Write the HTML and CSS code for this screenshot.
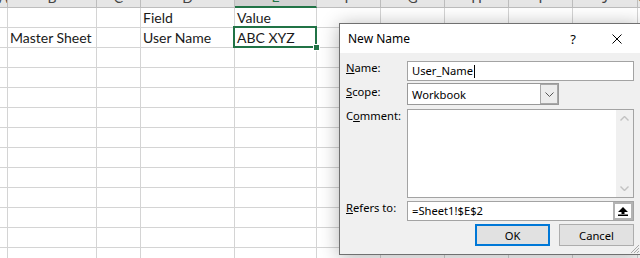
FILE: index.html
```html
<!DOCTYPE html>
<html lang="en">
<head>
  <meta charset="UTF-8">
  <title>New Name</title>
  <meta name="viewport" content="width=device-width, initial-scale=1">
  <link rel="stylesheet" href="styles.css">
</head>
<body>
  <!-- worksheet grid -->
  <div class="sheet" id="sheet">
    <div class="col-head"><span>A</span></div>
    <div class="col-head"><span>B</span></div>
    <div class="col-head"><span>C</span></div>
    <div class="col-head"><span>D</span></div>
    <div class="col-head active"><span>E</span></div>
    <div class="col-head"><span>F</span></div>
    <div class="col-head"><span>G</span></div>
    <div class="col-head"><span>H</span></div>
    <div class="col-head"><span>I</span></div>
    <div class="col-head"><span>J</span></div>
    <div class="col-head"><span>K</span></div>

    <div class="cell"></div>
    <div class="cell"></div>
    <div class="cell"></div>
    <div class="cell">Field</div>
    <div class="cell">Value</div>
    <div class="cell"></div>
    <div class="cell"></div>
    <div class="cell"></div>
    <div class="cell"></div>
    <div class="cell"></div>
    <div class="cell"></div>

    <div class="cell"></div>
    <div class="cell">Master Sheet</div>
    <div class="cell"></div>
    <div class="cell">User Name</div>
    <div class="cell active">ABC XYZ</div>
    <div class="cell"></div>
    <div class="cell"></div>
    <div class="cell"></div>
    <div class="cell"></div>
    <div class="cell"></div>
    <div class="cell"></div>
  </div>

  <!-- New Name dialog -->
  <div class="dialog">
    <div class="titlebar">
      <span class="title">New Name</span>
      <span class="help">?</span>
      <svg class="close" width="10" height="10" viewBox="0 0 10 10">
        <path d="M0.5 0.5 L9.5 9.5 M9.5 0.5 L0.5 9.5" stroke="#000" stroke-width="1" fill="none"/>
      </svg>
    </div>
    <div class="dlg-body">
      <div class="row">
        <label><u>N</u>ame:</label>
        <div class="input">User_Name<span class="caret"></span></div>
      </div>
      <div class="row scope-row">
        <label><u>S</u>cope:</label>
        <div class="combo">
          <span class="combo-text">Workbook</span>
          <span class="combo-btn">
            <svg width="9" height="5" viewBox="0 0 9 5"><path d="M0.5 0.5 L4.5 4.5 L8.5 0.5" stroke="#555" fill="none"/></svg>
          </span>
        </div>
      </div>
      <div class="row comment-row">
        <label>C<u>o</u>mment:</label>
        <div class="textarea">
          <div class="vscroll">
            <svg width="9" height="5" viewBox="0 0 9 5"><path d="M0.5 4.5 L4.5 0.5 L8.5 4.5" stroke="#c2c2c2" stroke-width="1.4" fill="none"/></svg>
            <svg width="9" height="5" viewBox="0 0 9 5"><path d="M0.5 0.5 L4.5 4.5 L8.5 0.5" stroke="#c2c2c2" stroke-width="1.4" fill="none"/></svg>
          </div>
        </div>
      </div>
      <div class="row refers-row">
        <label><u>R</u>efers to:</label>
        <div class="input refers">
          <span class="refers-text">=Sheet1!$E$2</span>
          <span class="collapse-btn">
            <svg width="10" height="9" viewBox="0 0 10 9"><path d="M5 0 L10 5 L6.5 5 L6.5 7 L3.5 7 L3.5 5 L0 5 Z M0 7.6 H10 V9 H0 Z" fill="#000"/></svg>
          </span>
        </div>
      </div>
      <div class="buttons">
        <button class="btn default">OK</button>
        <button class="btn">Cancel</button>
      </div>
    </div>
    <svg class="grip" width="11" height="11" viewBox="0 0 11 11">
      <path d="M10 2 L2 10 M10 5 L5 10 M10 8 L8 10" stroke="#a8a8a8" stroke-width="1" fill="none"/>
    </svg>
  </div>

  <script>
    // fill the rest of the sheet with empty rows
    const sheet = document.getElementById("sheet");
    for (let r = 3; r <= 13; r++) {
      for (let c = 0; c < 11; c++) {
        const cell = document.createElement("div");
        cell.className = "cell";
        sheet.appendChild(cell);
      }
    }
  </script>
</body>
</html>
```

FILE: styles.css
```css
:root {
  --grid: #d4d4d4;
  --head-bg: #e6e6e6;
  --head-line: #bdbdbd;
  --excel-green: #217346;
  --dlg-bg: #f0f0f0;
  --field-border: #a3a3a3;
  --accent: #0078d7;
}
* {
  box-sizing: border-box;
}
body {
  margin: 0;
  width: 640px;
  height: 258px;
  overflow: hidden;
  background: #fff;
  position: relative;
  font-family: Lato, "Liberation Sans", Arial, sans-serif;
}

/* sheet */
.sheet {
  display: grid;
  grid-template-columns: 8px 89px 44px 94px 82px 64px 64px 64px 64px 65px 1fr;
  grid-template-rows: 8px;
  grid-auto-rows: 20px;
}
.col-head {
  background: var(--head-bg);
  border-right: 1px solid var(--head-line);
  border-bottom: 1px solid var(--head-line);
  display: flex;
  justify-content: center;
  align-items: flex-end;
  overflow: hidden;
  font-size: 14px;
  color: #444;
}
.col-head span {
  line-height: 14px;
  margin-bottom: 2px;
}
.col-head.active {
  background: #d2d2d2;
  border-bottom: 2px solid var(--excel-green);
  color: var(--excel-green);
}
.cell {
  border-right: 1px solid var(--grid);
  border-bottom: 1px solid var(--grid);
  font-size: 14px;
  line-height: 19px;
  padding-left: 2px;
  white-space: nowrap;
  color: #1a1a1a;
}
.cell.active {
  position: relative;
  z-index: 2;
}
.cell.active::after {
  content: "";
  position: absolute;
  left: -2px;
  top: -2px;
  right: -1px;
  bottom: -1px;
  border: 2px solid var(--excel-green);
}
.cell.active::before {
  content: "";
  position: absolute;
  right: -3px;
  bottom: -3px;
  width: 5px;
  height: 5px;
  background: var(--excel-green);
  box-shadow: 0 0 0 1px #fff;
  z-index: 1;
}

/* dialog */
.dialog {
  position: absolute;
  left: 339px;
  top: 23px;
  width: 302px;
  height: 232px;
  border: 1px solid #707070;
  background: var(--dlg-bg);
  box-shadow: 0 2px 18px rgba(0, 0, 0, 0.3);
  font-family: "Segoe UI", "Noto Sans", sans-serif;
  color: #000;
  z-index: 5;
}
.titlebar {
  height: 29px;
  background: #fff;
  display: flex;
  align-items: center;
  padding-left: 8px;
}
.title {
  font-size: 12px;
  line-height: 16px;
}
.help {
  margin-left: auto;
  margin-right: 36px;
  font-size: 13px;
  line-height: 16px;
}
.close {
  margin-right: 18px;
}
.dlg-body {
  padding: 8px 6px 0 6px;
  font-size: 11.2px;
}
.row {
  display: flex;
  align-items: flex-start;
}
.row label {
  width: 61px;
  line-height: 14px;
  flex-shrink: 0;
}
.scope-row {
  margin-top: 2px;
}
.scope-row label {
  padding-top: 2px;
}
.comment-row {
  margin-top: 4px;
}
.refers-row {
  margin-top: 3px;
}
.input {
  width: 227px;
  height: 20px;
  background: #fff;
  border: 1px solid var(--field-border);
  padding-left: 4px;
  line-height: 18px;
  display: flex;
  align-items: center;
}
.caret {
  display: inline-block;
  width: 1px;
  height: 13px;
  background: #000;
  margin-left: 1px;
}
.combo {
  width: 152px;
  height: 22px;
  background: #fff;
  border: 1px solid #999;
  display: flex;
  align-items: stretch;
}
.combo-text {
  flex: 1;
  padding-left: 4px;
  line-height: 21px;
}
.combo-btn {
  width: 18px;
  background: #ededed;
  border: 1px solid #a8a8a8;
  display: flex;
  align-items: center;
  justify-content: center;
}
.textarea {
  width: 227px;
  height: 89px;
  background: #fff;
  border: 1px solid var(--field-border);
  display: flex;
  justify-content: flex-end;
}
.vscroll {
  width: 17px;
  background: #f0f0f0;
  display: flex;
  flex-direction: column;
  justify-content: space-between;
  align-items: center;
  padding: 6px 0;
}
.refers {
  padding-right: 0;
}
.refers-text {
  flex: 1;
}
.collapse-btn {
  width: 20px;
  height: 18px;
  background: #fff;
  border: 2px solid #b3b3b3;
  display: flex;
  align-items: center;
  justify-content: center;
}
.buttons {
  display: flex;
  justify-content: flex-end;
  gap: 9px;
  margin-top: 3px;
}
.btn {
  width: 75px;
  height: 22px;
  background: #e1e1e1;
  border: 1px solid #adadad;
  font-family: inherit;
  font-size: 11.2px;
  color: #000;
  padding: 0;
}
.btn.default {
  border: 2px solid var(--accent);
}
.grip {
  position: absolute;
  right: 0;
  bottom: 0;
}
```
